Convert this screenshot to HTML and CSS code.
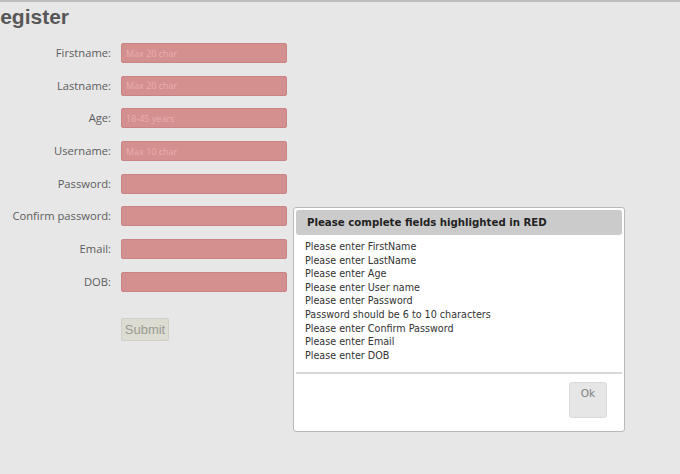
FILE: index.html
```html
<!DOCTYPE html>
<html>
<head>
<meta charset="utf-8">
<link rel="stylesheet" href="styles.css">
</head>
<body>
<div class="page">
  <h1 class="title">Register</h1>
  <form class="form">
    <label class="lbl">Firstname:</label><input class="inp" placeholder="Max 20 char">
    <label class="lbl">Lastname:</label><input class="inp" placeholder="Max 20 char">
    <label class="lbl">Age:</label><input class="inp" placeholder="18-45 years">
    <label class="lbl">Username:</label><input class="inp" placeholder="Max 10 char">
    <label class="lbl">Password:</label><input class="inp" type="password">
    <label class="lbl">Confirm password:</label><input class="inp" type="password">
    <label class="lbl">Email:</label><input class="inp">
    <label class="lbl">DOB:</label><input class="inp">
    <span></span><div class="submit-row"><button type="button" class="submit">Submit</button></div>
  </form>
</div>
<div class="dialog">
  <div class="dlg-head">Please complete fields highlighted in RED</div>
  <div class="dlg-body">
    <div>Please enter FirstName</div>
    <div>Please enter LastName</div>
    <div>Please enter Age</div>
    <div>Please enter User name</div>
    <div>Please enter Password</div>
    <div>Password should be 6 to 10 characters</div>
    <div>Please enter Confirm Password</div>
    <div>Please enter Email</div>
    <div>Please enter DOB</div>
  </div>
  <div class="dlg-foot"><button type="button" class="ok">Ok</button></div>
</div>
</body>
</html>
```
FILE: styles.css
```css
html, body {
  margin: 0;
  padding: 0;
}
body {
  background: #e7e7e7;
  border-top: 2px solid #bdbdbd;
  height: 472px;
  overflow: hidden;
  font-family: "Open Sans", "DejaVu Sans", sans-serif;
  position: relative;
}
.page {
  padding: 0;
}
.title {
  margin: 0 0 0 -15px;
  padding-top: 3px;
  font-family: "Liberation Sans", Arial, sans-serif;
  font-weight: bold;
  font-size: 21px;
  line-height: 24px;
  color: #575757;
}
.form {
  display: grid;
  grid-template-columns: 111px 166px;
  column-gap: 10px;
  row-gap: 12.7px;
  margin-top: 14px;
  align-items: center;
}
.lbl {
  text-align: right;
  font-size: 11.2px;
  color: #5c5c5c;
  line-height: 20px;
}
.inp {
  box-sizing: border-box;
  height: 20px;
  width: 166px;
  margin: 0;
  padding: 0 4px;
  background: #d48f8f;
  border: 1px solid #c98585;
  border-radius: 2px;
  font-family: "Open Sans", sans-serif;
  font-size: 9px;
  color: #333;
}
.inp::placeholder {
  color: #e8b0b0;
}
.submit-row {
  padding-top: 12px;
}
.submit {
  box-sizing: border-box;
  width: 48px;
  height: 23px;
  background: #dcdcd2;
  border: 1px solid #d0d0c6;
  border-radius: 2px;
  padding: 0;
  font-family: "Liberation Sans", Arial, sans-serif;
  font-size: 13px;
  color: #9a9a94;
}
.dialog {
  position: absolute;
  left: 293px;
  top: 205px;
  width: 332px;
  height: 225px;
  box-sizing: border-box;
  background: #fff;
  border: 1px solid #b9b9b9;
  border-radius: 3px;
  padding: 2px;
  display: flex;
  flex-direction: column;
  font-family: "DejaVu Sans", sans-serif;
}
.dlg-head {
  height: 25px;
  background: #cbcbcb;
  border-radius: 3px;
  padding-left: 11px;
  font-weight: bold;
  font-size: 10.2px;
  line-height: 25px;
  color: #222;
}
.dlg-body {
  padding: 5px 0 10px 9px;
  font-size: 9.6px;
  line-height: 13.6px;
  color: #333;
  border-bottom: 2px solid #d8d8d8;
}
.dlg-foot {
  display: flex;
  justify-content: flex-end;
  padding: 8px 15px 0 0;
}
.ok {
  box-sizing: border-box;
  width: 38px;
  height: 36px;
  background: #e6e6e6;
  border: 1px solid #dadada;
  border-radius: 3px;
  padding: 4px 0 0;
  display: flex;
  justify-content: center;
  align-items: flex-start;
  font-family: "DejaVu Sans", sans-serif;
  font-size: 10.5px;
  color: #808080;
}
```
